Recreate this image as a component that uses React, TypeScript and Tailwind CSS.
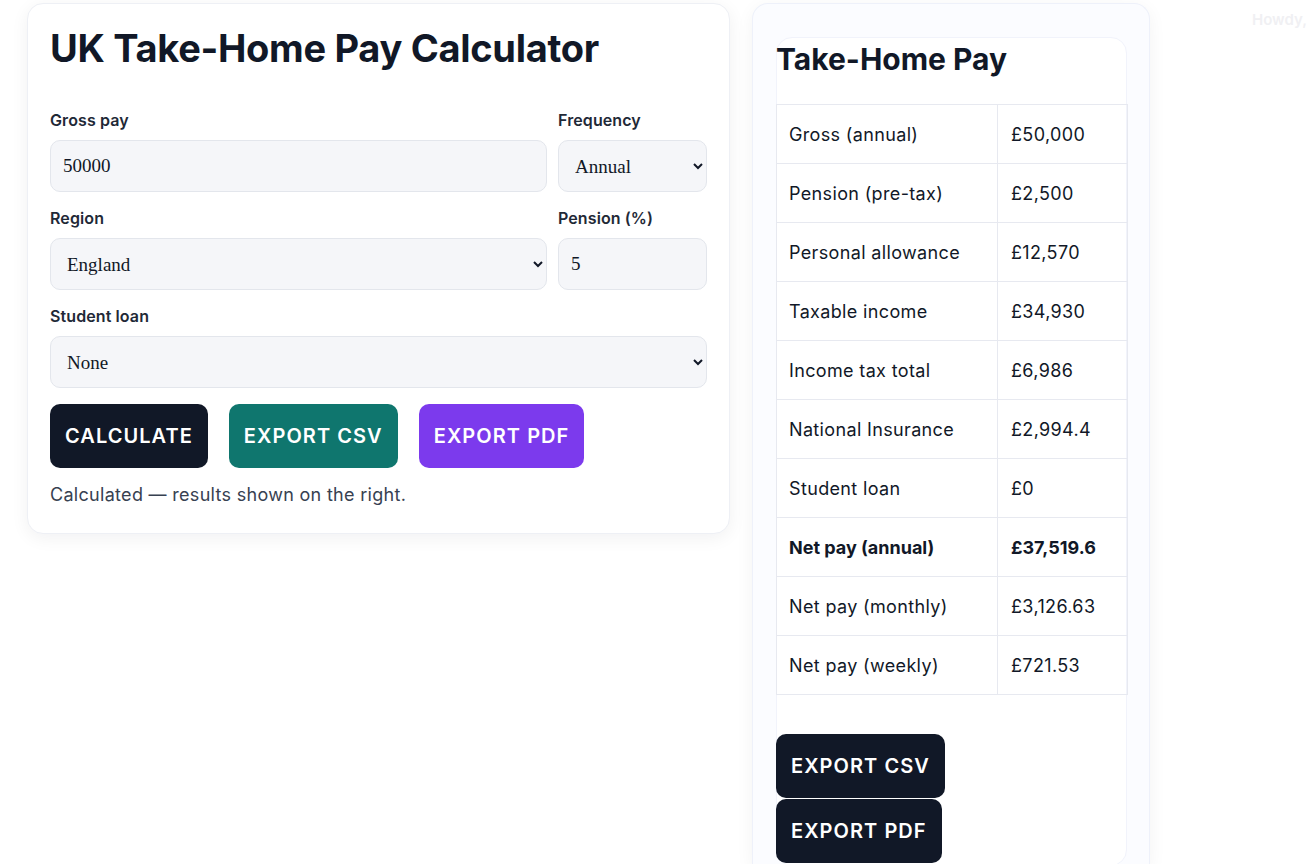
import React from 'react';

const rows: { label: string; value: string; strong?: boolean }[] = [
  { label: 'Gross (annual)', value: '£50,000' },
  { label: 'Pension (pre-tax)', value: '£2,500' },
  { label: 'Personal allowance', value: '£12,570' },
  { label: 'Taxable income', value: '£34,930' },
  { label: 'Income tax total', value: '£6,986' },
  { label: 'National Insurance', value: '£2,994.4' },
  { label: 'Student loan', value: '£0' },
  { label: 'Net pay (annual)', value: '£37,519.6', strong: true },
  { label: 'Net pay (monthly)', value: '£3,126.63' },
  { label: 'Net pay (weekly)', value: '£721.53' },
];

const fieldCls =
  "w-full h-[52px] rounded-[10px] border border-[#e3e6ec] bg-[#f5f6f9] px-3 text-[19px] text-[#111827] font-['Liberation_Serif',serif] outline-none";

const btnCls = 'h-16 rounded-[10px] px-[15px] text-[20px] font-semibold tracking-[1.05px] text-white';

function Field({ label, children }: { label: string; children: React.ReactNode }) {
  return (
    <label className="flex flex-col gap-[10px]">
      <span className="text-[16px] leading-5 font-semibold tracking-[0.1px] text-[#1f2937]">{label}</span>
      {children}
    </label>
  );
}

function CalculatorCard() {
  return (
    <section className="w-[703px] shrink-0 rounded-2xl border border-[#eef0f5] bg-white px-[22px] pt-[24px] pb-[26px] shadow-[0_4px_18px_rgba(17,24,39,0.06)]">
      <h1 className="text-[38px] leading-10 font-bold tracking-[-0.3px] text-[#111827]">UK Take-Home Pay Calculator</h1>

      <div className="mt-[42px] grid grid-cols-[1fr_149px] gap-x-[11px] gap-y-[16px]">
        <Field label="Gross pay">
          <input className={fieldCls} defaultValue="50000" />
        </Field>
        <Field label="Frequency">
          <select className={fieldCls} defaultValue="Annual">
            <option>Annual</option>
            <option>Monthly</option>
            <option>Weekly</option>
          </select>
        </Field>
        <Field label="Region">
          <select className={fieldCls} defaultValue="England">
            <option>England</option>
            <option>Scotland</option>
            <option>Wales</option>
            <option>Northern Ireland</option>
          </select>
        </Field>
        <Field label="Pension (%)">
          <input className={fieldCls} defaultValue="5" />
        </Field>
        <div className="col-span-2">
          <Field label="Student loan">
            <select className={fieldCls} defaultValue="None">
              <option>None</option>
              <option>Plan 1</option>
              <option>Plan 2</option>
            </select>
          </Field>
        </div>
      </div>

      <div className="mt-[16px] flex gap-[21px]">
        <button className={`${btnCls} bg-[#111827]`}>CALCULATE</button>
        <button className={`${btnCls} bg-[#0f766e]`}>EXPORT CSV</button>
        <button className={`${btnCls} bg-[#7c3aed]`}>EXPORT PDF</button>
      </div>

      <p className="mt-[15px] text-[18px] leading-6 tracking-[0.3px] text-[#374151]">Calculated — results shown on the right.</p>
    </section>
  );
}

function ResultsCard() {
  return (
    <section className="w-[398px] shrink-0 rounded-t-2xl border border-b-0 border-[#eef1fa] bg-[#fbfcff] pl-[23px] pr-[22px] pt-[33px] shadow-[0_4px_18px_rgba(17,24,39,0.05)]">
      <div className="rounded-2xl border border-[#f1f3fb] bg-white pb-[2px]">
        <h2 className="-ml-px pt-[3px] text-[30px] leading-9 font-bold text-[#111827]">Take-Home Pay</h2>
        <table className="-ml-px mt-[27px] w-[352px] border-collapse text-[18px] tracking-[0.35px] text-[#111827]">
          <tbody>
            {rows.map((r) => (
              <tr key={r.label} className={r.strong ? 'font-bold tracking-[0px]' : ''}>
                <td className="h-[59px] w-[221px] border border-[#e7e9f0] pl-[12px]">{r.label}</td>
                <td className="h-[59px] border border-[#e7e9f0] pl-[13px]">{r.value}</td>
              </tr>
            ))}
          </tbody>
        </table>
        <div className="-ml-px mt-[39px] flex flex-col items-start">
          <button className={`${btnCls} bg-[#111827]`}>EXPORT CSV</button>
          <button className={`${btnCls} mt-px bg-[#111827]`}>EXPORT PDF</button>
        </div>
      </div>
    </section>
  );
}

export default function App() {
  return (
    <div className="relative h-[864px] overflow-hidden bg-white font-['Inter','Noto_Sans',sans-serif]">
      <div className="flex items-start gap-[22px] pl-[27px] pt-[3px]">
        <CalculatorCard />
        <ResultsCard />
      </div>
      <span className="absolute left-[1252px] top-[9px] text-[15px] font-semibold text-[#f0f0f3]">Howdy,</span>
    </div>
  );
}
